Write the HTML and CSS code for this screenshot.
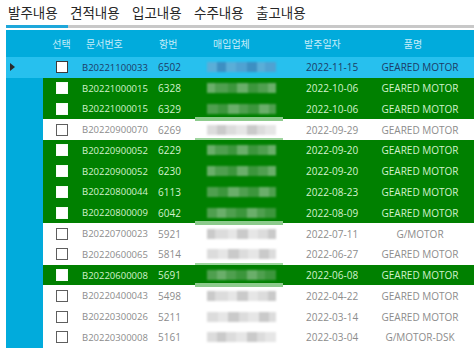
FILE: index.html
```html
<!DOCTYPE html>
<html lang="ko">
<head>
<meta charset="utf-8">
<title>발주내용</title>
<link rel="stylesheet" href="styles.css">
</head>
<body>
<div class="tabs">
  <span class="tab active">발주내용</span>
  <span class="tab">견적내용</span>
  <span class="tab">입고내용</span>
  <span class="tab">수주내용</span>
  <span class="tab">출고내용</span>
</div>
<div class="grid">
  <div class="row head">
    <div class="c rh"></div>
    <div class="c chk">선택</div>
    <div class="c doc">문서번호</div>
    <div class="c no">항번</div>
    <div class="c ven">매입업체</div>
    <div class="c date">발주일자</div>
    <div class="c prod">품명</div>
  </div>
  <div class="row sel">
    <div class="c rh"><span class="arrow"></span></div>
    <div class="c chk"><span class="box"></span></div>
    <div class="c doc">B20221100033</div>
    <div class="c no">6502</div>
    <div class="c ven"><i class="bl v1"></i></div>
    <div class="c date">2022-11-15</div>
    <div class="c prod">GEARED MOTOR</div>
  </div>
  <div class="row g">
    <div class="c rh"></div>
    <div class="c chk"><span class="box"></span></div>
    <div class="c doc">B20221000015</div>
    <div class="c no">6328</div>
    <div class="c ven"><i class="bl v2"></i></div>
    <div class="c date">2022-10-06</div>
    <div class="c prod">GEARED MOTOR</div>
  </div>
  <div class="row g">
    <div class="c rh"></div>
    <div class="c chk"><span class="box"></span></div>
    <div class="c doc">B20221000015</div>
    <div class="c no">6329</div>
    <div class="c ven"><i class="bl v3"></i></div>
    <div class="c date">2022-10-06</div>
    <div class="c prod">GEARED MOTOR</div>
  </div>
  <div class="row w bleed-top bleed-bot">
    <div class="c rh"></div>
    <div class="c chk"><span class="box"></span></div>
    <div class="c doc">B20220900070</div>
    <div class="c no">6269</div>
    <div class="c ven"><i class="bl v1"></i></div>
    <div class="c date">2022-09-29</div>
    <div class="c prod">GEARED MOTOR</div>
  </div>
  <div class="row g">
    <div class="c rh"></div>
    <div class="c chk"><span class="box"></span></div>
    <div class="c doc">B20220900052</div>
    <div class="c no">6229</div>
    <div class="c ven"><i class="bl v2"></i></div>
    <div class="c date">2022-09-20</div>
    <div class="c prod">GEARED MOTOR</div>
  </div>
  <div class="row g">
    <div class="c rh"></div>
    <div class="c chk"><span class="box"></span></div>
    <div class="c doc">B20220900052</div>
    <div class="c no">6230</div>
    <div class="c ven"><i class="bl v2"></i></div>
    <div class="c date">2022-09-20</div>
    <div class="c prod">GEARED MOTOR</div>
  </div>
  <div class="row g">
    <div class="c rh"></div>
    <div class="c chk"><span class="box"></span></div>
    <div class="c doc">B20220800044</div>
    <div class="c no">6113</div>
    <div class="c ven"><i class="bl v3"></i></div>
    <div class="c date">2022-08-23</div>
    <div class="c prod">GEARED MOTOR</div>
  </div>
  <div class="row g">
    <div class="c rh"></div>
    <div class="c chk"><span class="box"></span></div>
    <div class="c doc">B20220800009</div>
    <div class="c no">6042</div>
    <div class="c ven"><i class="bl v1"></i></div>
    <div class="c date">2022-08-09</div>
    <div class="c prod">GEARED MOTOR</div>
  </div>
  <div class="row w bleed-top">
    <div class="c rh"></div>
    <div class="c chk"><span class="box"></span></div>
    <div class="c doc">B20220700023</div>
    <div class="c no">5921</div>
    <div class="c ven"><i class="bl v2"></i></div>
    <div class="c date">2022-07-11</div>
    <div class="c prod">G/MOTOR</div>
  </div>
  <div class="row w bleed-bot">
    <div class="c rh"></div>
    <div class="c chk"><span class="box"></span></div>
    <div class="c doc">B20220600065</div>
    <div class="c no">5814</div>
    <div class="c ven"><i class="bl v3"></i></div>
    <div class="c date">2022-06-27</div>
    <div class="c prod">GEARED MOTOR</div>
  </div>
  <div class="row g">
    <div class="c rh"></div>
    <div class="c chk"><span class="box"></span></div>
    <div class="c doc">B20220600008</div>
    <div class="c no">5691</div>
    <div class="c ven"><i class="bl v1"></i></div>
    <div class="c date">2022-06-08</div>
    <div class="c prod">GEARED MOTOR</div>
  </div>
  <div class="row w bleed-top">
    <div class="c rh"></div>
    <div class="c chk"><span class="box"></span></div>
    <div class="c doc">B20220400043</div>
    <div class="c no">5498</div>
    <div class="c ven"><i class="bl v2"></i></div>
    <div class="c date">2022-04-22</div>
    <div class="c prod">GEARED MOTOR</div>
  </div>
  <div class="row w">
    <div class="c rh"></div>
    <div class="c chk"><span class="box"></span></div>
    <div class="c doc">B20220300026</div>
    <div class="c no">5211</div>
    <div class="c ven"><i class="bl v3"></i></div>
    <div class="c date">2022-03-14</div>
    <div class="c prod">GEARED MOTOR</div>
  </div>
  <div class="row w">
    <div class="c rh"></div>
    <div class="c chk"><span class="box"></span></div>
    <div class="c doc">B20220300008</div>
    <div class="c no">5161</div>
    <div class="c ven"><i class="bl v1"></i></div>
    <div class="c date">2022-03-04</div>
    <div class="c prod">G/MOTOR-DSK</div>
  </div>
</div>
</body>
</html>
```

FILE: styles.css
```css
* { box-sizing: border-box; }
html, body {
  margin: 0;
  padding: 0;
  background: #ffffff;
  width: 474px;
  height: 348px;
  overflow: hidden;
  font-family: "Open Sans", "Noto Sans CJK KR", sans-serif;
}

.tabs {
  display: flex;
  height: 28px;
  margin-left: 6px;
  border-bottom: 3px solid #c8c8c8;
  align-items: stretch;
}
.tab {
  font-family: "Noto Sans CJK KR", sans-serif;
  font-size: 13.5px;
  color: #262626;
  padding: 3px 6px 0 2px;
  width: 62px;
  line-height: 18px;
  white-space: nowrap;
  margin-bottom: -3px;
  border-bottom: 3px solid transparent;
}
.tab.active { border-bottom-color: #1ea7da; }

.grid {
  margin-top: 2px;
  margin-left: 6px;
  display: flex;
  flex-direction: column;
}
.row {
  display: grid;
  grid-template-columns: 37px 37px 76px 48px 98px 64px 108px;
  height: 20.77px;
  font-size: 10px;
  align-items: center;
  position: relative;
}
.c {
  height: 100%;
  display: flex;
  align-items: center;
  white-space: nowrap;
}
.rh { background: #01abdc; }

.head {
  height: 27px;
  background: #01abdc;
  color: #c6edf9;
  font-family: "Noto Sans CJK KR", sans-serif;
  font-size: 10px;
}
.head .chk { justify-content: center; }
.head .doc { padding-left: 6px; font-size: 10px; }
.head .no { padding-left: 3px; }
.head .ven { padding-left: 9px; }
.head .date { padding-left: 2px; }
.head .prod { justify-content: center; padding-right: 14px; }

.chk { justify-content: center; }
.doc { padding-left: 2px; font-size: 9.5px; }
.no { padding-left: 2px; }
.ven { padding-left: 3px; position: relative; }
.date { padding-left: 4px; }
.prod { justify-content: center; }

.box {
  display: block;
  width: 12px;
  height: 12px;
  background: #ffffff;
  border: 1px solid #555555;
}

.sel { background: #27c0ee; color: #1c3b66; }
.sel .rh { background: #27c0ee; position: relative; }
.arrow {
  position: absolute;
  left: 4px;
  top: 6px;
  width: 0;
  height: 0;
  border-top: 4px solid transparent;
  border-bottom: 4px solid transparent;
  border-left: 5px solid #2a2a2a;
}
.sel .box { border-color: #3a3a3a; }

.g { background: #008000; color: #d2f2cc; }
.g .box { border-color: #f4fff4; }

.w { background: #ffffff; color: #8c8c8c; }
.w .box { border-color: #5e5e5e; }

.bl {
  display: block;
  width: 69px;
  height: 10px;
  filter: blur(1.2px);
}
.bl.v1 { background: linear-gradient(90deg, var(--b1) 0 14%, var(--b2) 14% 28%, var(--b1) 28% 42%, var(--b3) 42% 58%, var(--b2) 58% 72%, var(--b1) 72% 84%, var(--b3) 84% 100%); }
.bl.v2 { background: linear-gradient(90deg, var(--b2) 0 12%, var(--b1) 12% 30%, var(--b3) 30% 44%, var(--b2) 44% 60%, var(--b3) 60% 74%, var(--b1) 74% 88%, var(--b2) 88% 100%); }
.bl.v3 { background: linear-gradient(90deg, var(--b1) 0 16%, var(--b3) 16% 30%, var(--b2) 30% 46%, var(--b1) 46% 60%, var(--b3) 60% 76%, var(--b2) 76% 90%, var(--b1) 90% 100%); }

.sel .bl { --b1: #5aaed8; --b2: #3d8fc2; --b3: #4fa2d2; }
.g .bl { --b1: #4f9f4f; --b2: #6aae6a; --b3: #3c963c; }
.w .bl { --b1: #dcdcdc; --b2: #cacaca; --b3: #e6e6e6; }

.bleed-top .ven::before,
.bleed-bot .ven::after {
  content: "";
  position: absolute;
  left: -9px;
  width: 88px;
  height: 4px;
  background: #8ccb8c;
  filter: blur(0.4px);
}
.bleed-top .ven::before { top: -2px; }
.bleed-bot .ven::after { bottom: -2px; background: #9fd69f; }
```
